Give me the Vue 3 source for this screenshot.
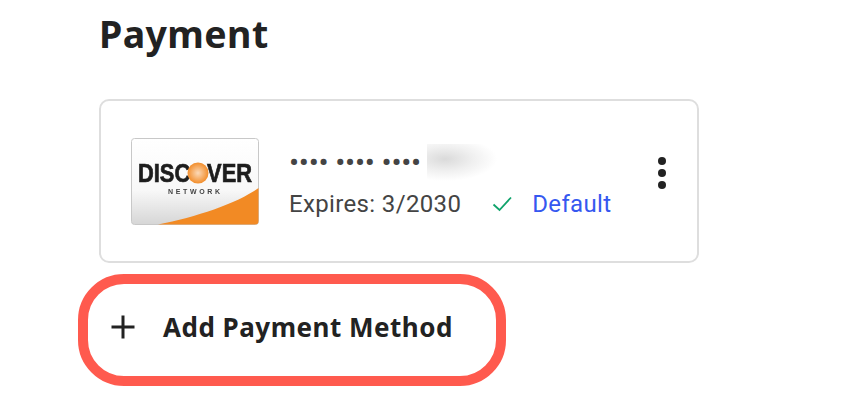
<script setup>
const card = { dots: ['••••', '••••', '••••'], expires: '3/2030' }
</script>

<template>
  <main class="page">
    <h1 class="title">Payment</h1>

    <section class="card">
      <div class="logo">
        <svg class="logo-art" viewBox="0 0 128 87" width="128" height="87">
          <defs>
            <linearGradient id="cardBg" x1="0" y1="0" x2="0" y2="1">
              <stop offset="0" stop-color="#ffffff" />
              <stop offset="0.6" stop-color="#f8f8f8" />
              <stop offset="1" stop-color="#d6d6d6" />
            </linearGradient>
            <radialGradient id="ball">
              <stop offset="0" stop-color="#fbd9b8" />
              <stop offset="1" stop-color="#f28e2c" />
            </radialGradient>
          </defs>
          <rect x="0.5" y="0.5" width="127" height="86" rx="3" fill="url(#cardBg)" stroke="#c8c8c8" />
          <path d="M27 86.5 C65 79 105 66 127.5 50 V83 Q127.5 86.5 124 86.5 Z" fill="#f28a24" />
          <text x="64" y="44" class="logo-word" text-anchor="middle" textLength="114" lengthAdjust="spacingAndGlyphs">DISCOVER</text>
          <circle cx="67" cy="35" r="10.5" fill="url(#ball)" />
          <text x="63" y="55.5" class="logo-sub" text-anchor="middle" textLength="52">NETWORK</text>
        </svg>
      </div>

      <div class="info">
        <div class="number">
          <span class="dots">
            <span v-for="(group, i) in card.dots" :key="i" class="dot-group">{{ group }}</span>
          </span>
          <span class="blurred"></span>
        </div>
        <div class="meta">
          <span class="expires">Expires: {{ card.expires }}</span>
          <svg class="check" viewBox="0 0 20 16" width="20" height="16">
            <path d="M1.5 8.5 L7.5 14 L19 1.5" fill="none" stroke="#0fa36b" stroke-width="1.8" />
          </svg>
          <span class="default">Default</span>
        </div>
      </div>

      <button class="more" aria-label="More">
        <span></span><span></span><span></span>
      </button>
    </section>

    <button class="add">
      <svg class="plus" viewBox="0 0 24 24" width="24" height="24">
        <path d="M12 0.5 V23.5 M0.5 12 H23.5" fill="none" stroke="#222" stroke-width="3" />
      </svg>
      <span>Add Payment Method</span>
    </button>
  </main>
</template>

<style>
html, body { background: #fff; }
</style>

<style scoped>
.page {
  width: 848px;
  height: 408px;
  box-sizing: border-box;
  padding: 10px 0 0 99px;
  overflow: hidden;
  font-family: Roboto, "Noto Sans", sans-serif;
  color: #222;
}
.title {
  margin: 0 0 42px;
  font-family: "Noto Sans", Roboto, sans-serif;
  font-size: 37.5px;
  line-height: 47px;
  font-weight: 700;
  letter-spacing: 0.4px;
  color: #222;
}
.card {
  width: 600px;
  height: 164px;
  box-sizing: border-box;
  border: 2px solid #dedede;
  border-radius: 10px;
  display: flex;
  align-items: center;
  padding: 0 28px 0 30px;
}
.logo { width: 128px; height: 87px; flex: none; }
.logo-art { display: block; filter: blur(0.7px); }
.logo-word {
  font-family: "Liberation Sans", sans-serif;
  font-size: 25px;
  font-weight: 700;
  fill: #1d1d1d;
  stroke: #1d1d1d;
  stroke-width: 0.7px;
}
.logo-sub {
  font-family: "Liberation Sans", sans-serif;
  font-size: 7px;
  font-weight: 700;
  fill: #444;
}
.info {
  margin-left: 30px;
  flex: 1;
  display: flex;
  flex-direction: column;
  gap: 7px;
}
.number { display: flex; align-items: center; height: 38px; }
.dots { display: flex; gap: 7px; width: 138px; }
.dot-group {
  font-size: 30px;
  letter-spacing: -0.3px;
  line-height: 24px;
  color: #444;
}
.blurred {
  width: 72px;
  height: 38px;
  background: radial-gradient(ellipse 52px 22px at 18px 15px, #dadada, #f0f0f0 55%, #fff);
}
.meta { display: flex; align-items: center; }
.expires {
  font-size: 24px;
  line-height: 30px;
  letter-spacing: 0.35px;
  color: #444;
}
.check { margin-left: 31px; flex: none; }
.default {
  margin-left: 20px;
  font-size: 24px;
  line-height: 30px;
  letter-spacing: 0.35px;
  color: #3558f0;
}
.more {
  width: 14px;
  padding: 0;
  border: 0;
  background: none;
  display: flex;
  flex-direction: column;
  align-items: center;
  gap: 4px;
  margin-bottom: 16px;
}
.more span {
  width: 8px;
  height: 8px;
  border-radius: 50%;
  background: #222;
}
.add {
  margin: 11px 0 0 -21px;
  width: 428px;
  height: 112px;
  box-sizing: border-box;
  border: 10px solid #ff5a4e;
  border-radius: 46px;
  background: #fff;
  padding: 0 0 6px 23px;
  display: flex;
  align-items: center;
  gap: 28px;
  font-family: "Noto Sans", Roboto, sans-serif;
  font-size: 26px;
  font-weight: 700;
  letter-spacing: 0.5px;
  color: #222;
}
.plus { flex: none; }
</style>
